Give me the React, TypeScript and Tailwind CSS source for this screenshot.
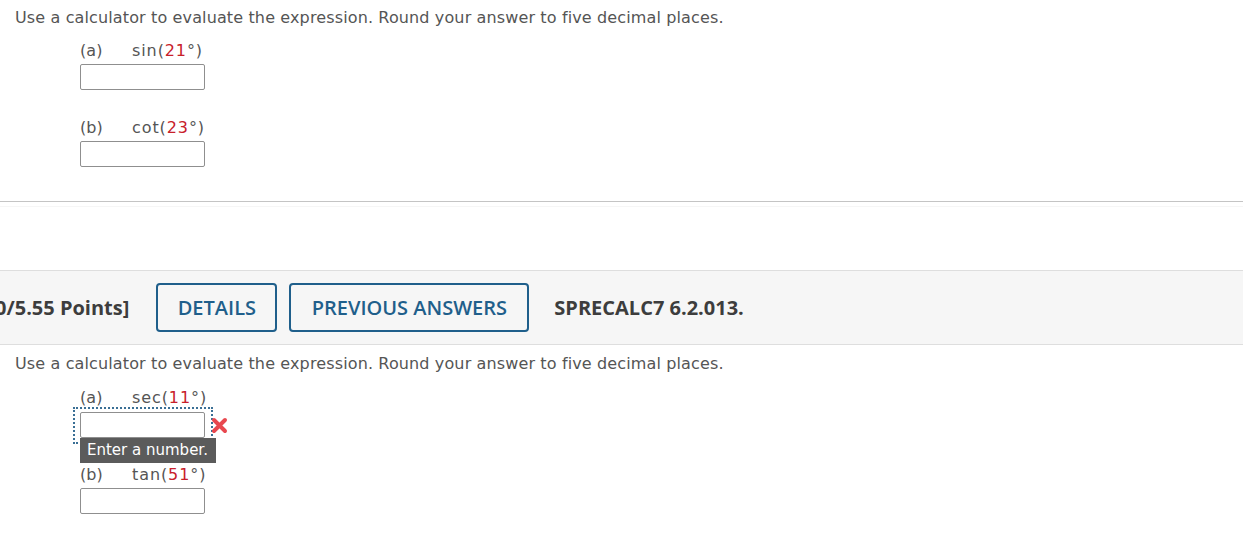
import React from 'react';

const body = { fontFamily: '"DejaVu Sans", Verdana, sans-serif' };
const head = { fontFamily: '"Open Sans", sans-serif' };

function Expr({ label, fn, arg }: { label: string; fn: string; arg: string }) {
  return (
    <div className="flex items-center h-[22px] text-[16px] tracking-[0.1px] text-[#555]">
      <span className="w-[52px]">({label})</span>
      <span className="tracking-[0.9px]">
        {fn}(<span className="text-[#c8202a]">{arg}</span>°)
      </span>
    </div>
  );
}

function AnswerBox() {
  return <div className="w-[125px] h-[26px] border border-[#8f8f8f] rounded-[2px] bg-white" />;
}

export default function App() {
  return (
    <div className="w-[1243px] h-[541px] bg-white overflow-hidden" style={body}>
      {/* first question */}
      <div className="pt-[7px] pl-[15px]">
        <p className="text-[16px] tracking-[0.13px] text-[#555] leading-[22px]">
          Use a calculator to evaluate the expression. Round your answer to five decimal places.
        </p>
        <div className="pl-[65px] pt-[11px]">
          <Expr label="a" fn="sin" arg="21" />
          <div className="mt-[2px]"><AnswerBox /></div>
          <div className="mt-[27px]"><Expr label="b" fn="cot" arg="23" /></div>
          <div className="mt-[2px]"><AnswerBox /></div>
        </div>
      </div>

      <div className="mt-[34px] border-t border-[#c4c4c4]" />
      <div className="mt-[4px] border-t border-[#f6f6f6]" />

      {/* header band */}
      <div className="mt-[63px] h-[75px] bg-[#f6f6f6] border-y border-[#dedede] flex items-center" style={head}>
        <span className="-ml-[5px] text-[20px] font-bold text-[#3d3d3d] whitespace-nowrap">0/5.55 Points]</span>
        <button className="ml-[27px] w-[121px] h-[49px] border-2 border-[#1f5f8b] rounded-[4px] text-[20px] font-semibold text-[#1f5f8b] bg-transparent">
          DETAILS
        </button>
        <button className="ml-[12px] w-[240px] h-[49px] border-2 border-[#1f5f8b] rounded-[4px] text-[20px] font-semibold text-[#1f5f8b] bg-transparent">
          PREVIOUS ANSWERS
        </button>
        <span className="ml-[25px] text-[20px] font-bold text-[#3d3d3d]">SPRECALC7 6.2.013.</span>
      </div>

      {/* second question */}
      <div className="pt-[8px] pl-[15px]">
        <p className="text-[16px] tracking-[0.13px] text-[#555] leading-[22px]">
          Use a calculator to evaluate the expression. Round your answer to five decimal places.
        </p>
        <div className="pl-[65px] pt-[12px]">
          <Expr label="a" fn="sec" arg="11" />
          <div className="relative">
            <div className="absolute -left-[7px] -top-[5px] w-[140px] h-[37px] border-2 border-dotted border-[#3a6f95]" />
            <div className="relative flex items-center mt-[3px]">
              <AnswerBox />
              <svg className="ml-[6px]" width="17" height="17" viewBox="0 0 17 17">
                <path d="M3 3 L14 14 M14 3 L3 14" stroke="#e8484f" strokeWidth="4" strokeLinecap="round" />
              </svg>
            </div>
            <div className="relative w-[136px] h-[25px] bg-[#5b5b5b] text-white text-[15px] leading-[25px] pl-[7px]">
              Enter a number.
            </div>
          </div>
          <div className="mt-[1px]"><Expr label="b" fn="tan" arg="51" /></div>
          <div className="mt-[2px]"><AnswerBox /></div>
        </div>
      </div>
    </div>
  );
}
